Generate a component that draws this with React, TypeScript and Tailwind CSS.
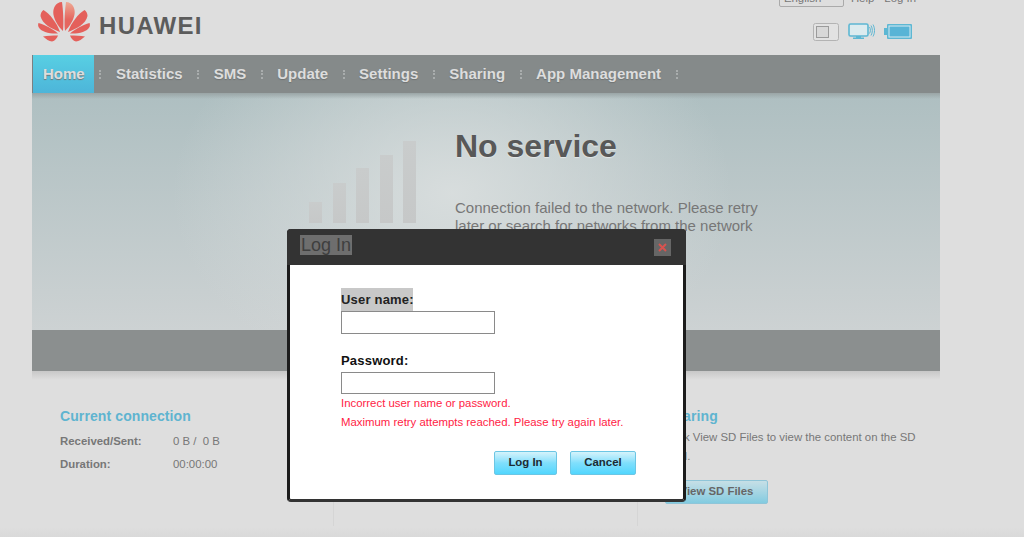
import React from 'react';

const navItems = ['Statistics', 'SMS', 'Update', 'Settings', 'Sharing', 'App Management'];
const bars = [21, 40, 55, 68, 82];
const leftPetals = [
  'M33 31C27 25 20 14 25 6C26 4 29 2 32 2C33 9 34 22 33 31Z',
  'M30 32C22 29 12 24 10.5 16C10.5 13 12 11 13.5 10C20 14 27 23 30 32Z',
  'M28 33.5C20 34 11 32 8.5 27C8 25.5 8 24 8.5 23C15 25 23 29 28 33.5Z',
  'M28 35.5C23 35.5 17 35.5 13 36.5C16 39 19 41.5 22 41.5C25 41 27 38 28 35.5Z',
];

function NavSeparator() {
  return <span className="mx-[14.5px] h-[9px] w-[2px] border-l-2 border-dotted border-[#a9adad]" />;
}

function HuaweiLogo() {
  return (
    <svg width="68" height="44" viewBox="0 0 68 44">
      <defs>
        <linearGradient id="petalTop" x1="0" y1="0" x2="0" y2="1">
          <stop offset="0" stopColor="#eeaa95" />
          <stop offset="0.6" stopColor="#e5665f" />
        </linearGradient>
      </defs>
      {leftPetals.map((d, i) => (
        <React.Fragment key={d}>
          <path d={d} fill="#e4605b" />
          <path d={d} transform="translate(68 0) scale(-1 1)" fill={i === 0 ? 'url(#petalTop)' : '#e4605b'} />
        </React.Fragment>
      ))}
    </svg>
  );
}

function DeviceIcons() {
  return (
    <div className="mt-[16px] flex items-start justify-end gap-[9px] pr-[28px]">
      <svg width="26" height="18" viewBox="0 0 26 18">
        <rect x="0.5" y="0.5" width="25" height="17" rx="2" fill="#e2e2e2" stroke="#b3b3b3" />
        <rect x="3.5" y="3.5" width="12" height="11" fill="#d8d8d8" stroke="#9b9b9b" />
      </svg>
      <svg width="27" height="16" viewBox="0 0 27 16">
        <rect x="1" y="1" width="19" height="12" rx="1.5" fill="#dcebef" stroke="#5db7d3" strokeWidth="1.6" />
        <path d="M8 13h5v1.5h3V16H5v-1.5h3z" fill="#5db7d3" />
        <path d="M21.5 4c1.2 2 1.2 4.500 0 6.500M23 2.500c1.800 3 1.800 7 0 10M25 1.500c2 3.500 2 8.500 0 12" fill="none" stroke="#5db7d3" />
      </svg>
      <svg width="28" height="15" viewBox="0 0 28 15" className="mt-[1px]">
        <rect x="0" y="4" width="3" height="7" fill="#5db7d3" />
        <rect x="3" y="0" width="25" height="15" rx="1" fill="#5db7d3" />
        <rect x="5" y="2" width="21" height="11" fill="#58b4d6" stroke="#d5eaf1" />
      </svg>
    </div>
  );
}

function LoginDialog() {
  return (
    <div className="absolute left-[287px] top-[229px] flex h-[273px] w-[399px] flex-col rounded-[4px] border-[3px] border-t-0 border-[#1c1c1c] border-b-[#333333] bg-white font-['Liberation_Sans',sans-serif]">
      <div className="-mx-[3px] flex h-[36px] shrink-0 items-start justify-between rounded-t-[4px] bg-[#333333] pl-[13px] pr-[15px]">
        <span className="mt-[6px] bg-[#6e6e6e] px-[1px] text-[18px] leading-[20px] text-[#3f3f3f]">Log In</span>
        <span className="mt-[10px] flex h-[17px] w-[17px] items-center justify-center bg-[#666666]">
          <svg width="9" height="9" viewBox="0 0 9 9">
            <path d="M1 1l7 7M8 1L1 8" stroke="#d9534f" strokeWidth="2" />
          </svg>
        </span>
      </div>
      <div className="flex flex-1 flex-col pl-[51px]">
        <span className="mt-[23px] w-[72px] whitespace-nowrap bg-[#c8c8c8] text-[13px] font-bold leading-[23px] tracking-[0.2px] text-[#222222]">User name:</span>
        <div className="h-[23px] w-[154px] border border-[#8a8a8a] bg-white" />
        <span className="mt-[15px] text-[13px] font-bold leading-[23px] tracking-[0.2px] text-[#111111]">Password:</span>
        <div className="h-[22px] w-[154px] border border-[#8a8a8a] bg-white" />
        <p className="text-[11.4px] leading-[19px] text-[#ff2244]">Incorrect user name or password.</p>
        <p className="text-[11.4px] leading-[19px] text-[#ff2244]">Maximum retry attempts reached. Please try again later.</p>
        <div className="mt-[19px] flex gap-[13px] pl-[153px]">
          <button className="h-[24px] w-[63px] rounded-[2px] border border-[#6cc6e4] bg-gradient-to-b from-[#d4f3fb] via-[#7fdffc] to-[#50d6fe] text-[11.4px] font-bold text-[#1c2b33]">Log In</button>
          <button className="h-[24px] w-[66px] rounded-[2px] border border-[#6cc6e4] bg-gradient-to-b from-[#d4f3fb] via-[#7fdffc] to-[#50d6fe] text-[11.4px] font-bold text-[#1c2b33]">Cancel</button>
        </div>
      </div>
    </div>
  );
}

export default function App() {
  return (
    <div className="relative h-[537px] w-[1024px] overflow-hidden bg-[#dedede] font-['Liberation_Sans',sans-serif]">
      <div className="ml-[32px] w-[908px]">
        {/* Header */}
        <header className="flex h-[55px] justify-between overflow-hidden">
          <div className="-ml-[2px] flex items-start gap-[1px]">
            <HuaweiLogo />
            <span className="mt-[13px] text-[24px] font-bold leading-[26px] tracking-[1.3px] text-[#5c5c5c]">HUAWEI</span>
          </div>
          <div>
            <div className="-mt-[10px] flex h-[17px] items-center justify-end gap-[7px] pr-[24px] text-[11.4px] text-[#777777]">
              <span className="flex h-[17px] w-[65px] items-center justify-between rounded-[2px] border border-[#aaaaaa] px-[4px]">
                English
                <span className="text-[7px]">▼</span>
              </span>
              <span>Help</span>
              <span className="ml-[3px]">Log In</span>
            </div>
            <DeviceIcons />
          </div>
        </header>

        {/* Nav */}
        <nav className="flex h-[38px] items-center bg-[#858a8a] text-[15px] font-bold text-[#dddddd] [text-shadow:0_1px_1px_#6f7373]">
          <span className="flex h-full w-[62px] items-center border-l border-[#7b8082] bg-gradient-to-b from-[#58cfe3] to-[#4db5d9] pl-[10px]">Home</span>
          <span className="ml-[5px] mr-[15px] h-[9px] w-[2px] border-l-2 border-dotted border-[#a9adad]" />
          {navItems.map((item) => (
            <React.Fragment key={item}>
              <span>{item}</span>
              <NavSeparator />
            </React.Fragment>
          ))}
        </nav>

        {/* Status hero */}
        <section className="relative flex h-[237px] bg-[radial-gradient(ellipse_280px_200px_at_420px_100px,rgba(217,222,222,0.95)_0%,rgba(217,222,222,0)_100%),linear-gradient(to_bottom,#aebfc1,#cdd2d3)]">
          <div className="absolute inset-x-0 top-0 h-[6px] bg-gradient-to-b from-[#9aa5a6] to-transparent" />
          <div className="ml-[277px] mt-[48px] flex h-[82px] items-end gap-[10.5px]">
            {bars.map((height) => (
              <div key={height} className="w-[13px] bg-gradient-to-b from-[#c9cccc] to-[#c6c8c8]" style={{ height }} />
            ))}
          </div>
          <div className="ml-[39px] w-[320px]">
            <h1 className="mt-[34px] text-[32px] font-bold leading-[38px] text-[#585858] [text-shadow:0_1px_1px_#e4e8e8]">No service</h1>
            <p className="mt-[34px] text-[15px] leading-[18px] text-[#777777]">
              Connection failed to the network. Please retry later or search for networks from the network
            </p>
          </div>
        </section>
        <div className="h-[41px] bg-[#8b8f8f]" />
        <div className="h-[9px] bg-gradient-to-b from-[#c8c8c8] to-[#dedede]" />

        {/* Bottom info */}
        <section className="flex h-[146px] text-[11.4px] text-[#777777]">
          <div className="w-[302px] border-r border-[#d5d5d5] pl-[28px] pt-[27px]">
            <h2 className="text-[14px] font-bold leading-[18px] tracking-[0.1px] text-[#5fb4d0]">Current connection</h2>
            <div className="mt-[5px] flex h-[23px] items-center">
              <span className="w-[113px] font-bold">Received/Sent:</span>
              <span>0 B /&nbsp; 0 B</span>
            </div>
            <div className="flex h-[23px] items-center">
              <span className="w-[113px] font-bold">Duration:</span>
              <span>00:00:00</span>
            </div>
          </div>
          <div className="w-[304px] border-r border-[#d5d5d5]" />
          <div className="w-[302px] pl-[27px] pr-[24px] pt-[27px]">
            <h2 className="text-[14px] font-bold leading-[18px] tracking-[0.1px] text-[#5fb4d0]">Sharing</h2>
            <p className="mt-[3px] leading-[19px]">Click View SD Files to view the content on the SD card.</p>
            <button className="mt-[14px] h-[24px] w-[103px] rounded-[2px] border border-[#8fc5d8] bg-gradient-to-b from-[#c6dfe6] to-[#82cbe0] font-bold text-[#666666]">View SD Files</button>
          </div>
        </section>
      </div>
      <div className="absolute inset-x-0 bottom-0 h-[10px] bg-gradient-to-b from-[#dedede] to-[#d9d9d9]" />
      <LoginDialog />
    </div>
  );
}
